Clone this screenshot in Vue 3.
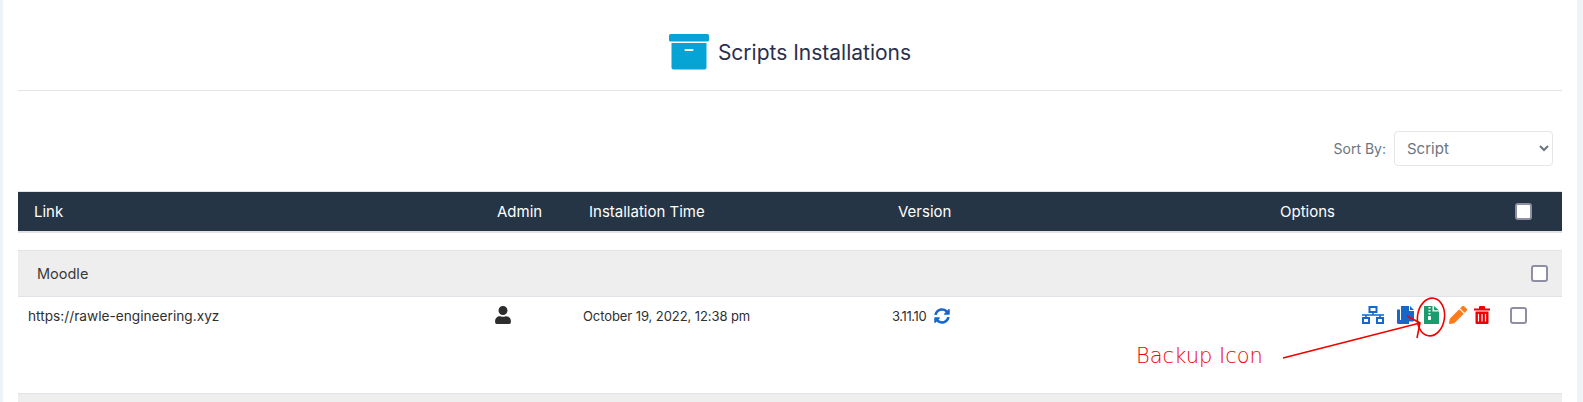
<script setup>
const cols = ['Link', 'Admin', 'Installation Time', 'Version', 'Options']
</script>

<template>
  <div class="page">
    <main class="card">
      <header class="title">
        <svg class="box" viewBox="0 0 40 36" aria-hidden="true">
          <rect x="0" y="0" width="40" height="7.500" rx="1.500" fill="#06a3d5" />
          <path d="M2.500 9h35v24.500a2 2 0 0 1-2 2h-31a2 2 0 0 1-2-2z" fill="#06a3d5" />
          <rect x="15.500" y="15" width="9" height="2" rx="1" fill="#fff" />
        </svg>
        <h1>Scripts Installations</h1>
      </header>

      <div class="sort">
        <label for="sort-by">Sort By:</label>
        <select id="sort-by"><option>Script</option></select>
      </div>

      <section class="table">
        <div class="row head">
          <span v-for="c in cols" :key="c">{{ c }}</span>
          <span class="end"><input type="checkbox" class="check" /></span>
        </div>
        <div class="spacer"></div>
        <div class="group">
          <span>Moodle</span>
          <input type="checkbox" class="check" />
        </div>
        <div class="row item">
          <span class="link">https://rawle-engineering.xyz</span>
          <span class="admin">
            <svg viewBox="0 0 448 512" width="16" height="18" fill="#2d2d2d"><path d="M224 256c70.700 0 128-57.300 128-128S294.700 0 224 0 96 57.300 96 128s57.300 128 128 128zm89.600 32h-16.700c-22.200 10.200-46.900 16-72.900 16s-50.600-5.800-72.900-16h-16.700C60.200 288 0 348.200 0 422.400V464c0 26.500 21.500 48 48 48h352c26.500 0 48-21.500 48-48v-41.600c0-74.200-60.200-134.400-134.400-134.400z" /></svg>
          </span>
          <span class="time">October 19, 2022, 12:38 pm</span>
          <span class="version">
            <span class="vnum">3.11.10</span>
            <svg viewBox="0 0 512 512" width="16" height="16" fill="#1667c9"><path d="M370.720 133.280C339.458 104.008 298.888 87.962 255.848 88c-77.458.068-144.328 53.178-162.791 126.850-1.344 5.363-6.122 9.150-11.651 9.150H24.103c-7.498 0-13.194-6.807-11.807-14.176C33.933 94.924 134.813 8 256 8c66.448 0 126.791 26.136 171.315 68.685L463.030 40.970C478.149 25.851 504 36.559 504 57.941V192c0 13.255-10.745 24-24 24H345.941c-21.382 0-32.090-25.851-16.971-40.971l41.750-41.749zM32 296h134.059c21.382 0 32.090 25.851 16.971 40.971l-41.750 41.750c31.262 29.273 71.835 45.319 114.876 45.280 77.418-.07 144.315-53.144 162.787-126.849 1.344-5.363 6.122-9.150 11.651-9.150h57.304c7.498 0 13.194 6.807 11.807 14.176C478.067 417.076 377.187 504 256 504c-66.448 0-126.791-26.136-171.315-68.685L48.970 471.030C33.851 486.149 8 475.441 8 454.059V320c0-13.255 10.745-24 24-24z" /></svg>
          </span>
          <span class="options"></span>
          <span class="icons">
            <svg class="i-net" viewBox="0 0 24 18" width="24" height="18" fill="none" stroke="#1667c9" stroke-width="2">
              <rect x="8.500" y="1" width="7" height="5" />
              <path d="M12 6v3M1 9h22M5 9v3M19 9v3" stroke-width="1.600" />
              <rect x="2" y="12" width="6" height="5" />
              <rect x="16" y="12" width="6" height="5" />
            </svg>
            <svg class="i-copy" viewBox="0 0 19 18" width="19" height="18">
              <path d="M0 3.500h3V14h9v4H1.500A1.500 1.500 0 0 1 0 16.500z" fill="#1667c9" />
              <path d="M4 0h8v5h5v9.500a1 1 0 0 1-1 1H5a1 1 0 0 1-1-1z" fill="#1667c9" />
              <path d="M13 0l4 4h-4z" fill="#1667c9" />
            </svg>
            <svg class="i-zip" viewBox="0 0 15 18" width="15" height="18">
              <path d="M0 0h8.500v5.500H15V18H0z" fill="#1a9c6e" />
              <path d="M10 0l5 4.200h-5z" fill="#1a9c6e" />
              <path d="M4.500 1h2v1.500h-2zM4.500 4h2v1.500h-2zM4.500 7h2v1.500h-2z" fill="#fff" />
              <rect x="4" y="10" width="3" height="4" rx=".8" fill="#fff" />
            </svg>
            <svg class="i-pen" viewBox="0 0 512 512" width="18" height="18" fill="#ff7a18"><path d="M497.900 142.100l-46.100 46.100c-4.700 4.700-12.300 4.700-17 0l-111-111c-4.700-4.700-4.700-12.300 0-17l46.100-46.100c18.700-18.700 49.100-18.700 67.900 0l60.100 60.100c18.800 18.700 18.800 49.100 0 67.900zM284.200 99.800L21.600 362.400.4 483.900c-2.900 16.400 11.400 30.600 27.800 27.800l121.500-21.300 262.600-262.600c4.700-4.700 4.700-12.300 0-17l-111-111c-4.800-4.700-12.400-4.700-17.100 0z" /></svg>
            <svg class="i-bin" viewBox="0 0 16 18" width="16" height="18">
              <path d="M0 2.500h5V1a1 1 0 0 1 1-1h4a1 1 0 0 1 1 1v1.500h5v2H0z" fill="#f00000" />
              <path d="M1.500 5.500h13V17a1 1 0 0 1-1 1h-11a1 1 0 0 1-1-1z" fill="#f00000" />
              <path d="M4.500 8v7.500M8 8v7.500M11.500 8v7.500" stroke="#fff" stroke-width="1.200" />
            </svg>
            <input type="checkbox" class="check" />
          </span>
        </div>
        <div class="group next"></div>
      </section>
    </main>

    <svg class="notes" viewBox="0 0 1583 402" width="1583" height="402" fill="none" stroke="#f00000" stroke-width="1.600" aria-hidden="true">
      <ellipse cx="1431" cy="317" rx="13.500" ry="19" transform="rotate(8 1431 317)" />
      <path d="M1283 358L1420 323M1407 316L1420 323L1417 338" />
    </svg>
    <span class="note-text">Backup Icon</span>
  </div>
</template>

<style>
html, body { margin: 0; overflow: hidden; background: #eef3f8; }
</style>

<style scoped>
.page {
  position: relative;
  width: 1583px;
  height: 402px;
  overflow: hidden;
  padding: 0 6px 0 3px;
  box-sizing: border-box;
  font-family: Inter, "Open Sans", sans-serif;
}
.card {
  height: 100%;
  background: #fff;
  padding: 0 15px;
}
.title {
  height: 91px;
  box-sizing: border-box;
  border-bottom: 1px solid #e2e4e8;
  display: flex;
  align-items: center;
  justify-content: center;
  gap: 9px;
  padding: 22px 0 0 0;
}
.box { width: 40px; height: 36px; margin-bottom: 9px; }
h1 {
  margin: 0 0 7px;
  font-size: 21px;
  font-weight: 400;
  color: #2a2f4d;
}
.sort {
  display: flex;
  justify-content: flex-end;
  align-items: center;
  gap: 8px;
  margin: 40px 9px 0 0;
  height: 35px;
  font-size: 14px;
  color: #6c757d;
}
select {
  width: 159px;
  height: 35px;
  box-sizing: border-box;
  padding-left: 8px;
  border: 1px solid #e4e6ea;
  border-radius: 4px;
  background: #fff;
  color: #6c757d;
  font: inherit;
  font-size: 15px;
}
.table { margin-top: 25px; }
.row {
  display: grid;
  grid-template-columns: 472px 92px 309px 382px 1fr 120px;
  align-items: center;
}
.head {
  height: 42px;
  box-sizing: border-box;
  border-top: 1px solid #e2e4e8;
  border-bottom: 2px solid #dfe3e8;
  background: #253545;
  color: #fff;
  font-size: 15px;
}
.head > span { padding-left: 16px; }
.head > span:nth-child(2),
.head > span:nth-child(3),
.head > span:nth-child(4),
.head > span:nth-child(5) { padding-left: 7px; }
.head .end { padding: 0; display: flex; justify-content: flex-end; padding-right: 30px; }
.spacer { height: 17px; }
.group {
  height: 47px;
  box-sizing: border-box;
  border-top: 1px solid #e0e2e7;
  border-bottom: 1px solid #e0e2e7;
  background: #eee;
  display: flex;
  align-items: center;
  justify-content: space-between;
  padding: 0 14px 0 19px;
  font-size: 14.500px;
  color: #3a3a3a;
}
.group.next { height: 10px; margin-top: 0; border-bottom: 0; }
.item {
  height: 96px;
  align-items: start;
  padding-top: 9px;
  box-sizing: border-box;
  font-size: 13px;
  color: #2f2f2f;
  grid-template-columns: 472px 92px 306px 1fr 0 auto;
}
.link { padding: 2px 0 0 10px; font-size: 13.700px; }
.admin { padding-left: 5px; }
.time { padding: 2px 0 0 1px; letter-spacing: -0.08px; }
.version { padding: 2px 0 0 4px; display: flex; align-items: center; gap: 8px; }
.vnum { letter-spacing: -0.4px; }
.icons {
  display: flex;
  align-items: center;
  padding-right: 35px;
}
.i-net { margin-right: 12px; }
.i-copy { margin-right: 8px; }
.i-zip { margin-right: 10px; }
.i-pen { margin-right: 7px; }
.i-bin { margin-right: 20px; }
.check {
  appearance: none;
  margin: 0;
  width: 17px;
  height: 17px;
  box-sizing: border-box;
  background: #fff;
  border: 2px solid #8f8fa3;
  border-radius: 3px;
  display: block;
}
.notes { position: absolute; inset: 0; pointer-events: none; }
.note-text {
  position: absolute;
  left: 1136px;
  top: 344px;
  font-family: "DejaVu Sans", sans-serif;
  font-weight: 200;
  font-size: 21px;
  color: #f00000;
  white-space: nowrap;
}
</style>
